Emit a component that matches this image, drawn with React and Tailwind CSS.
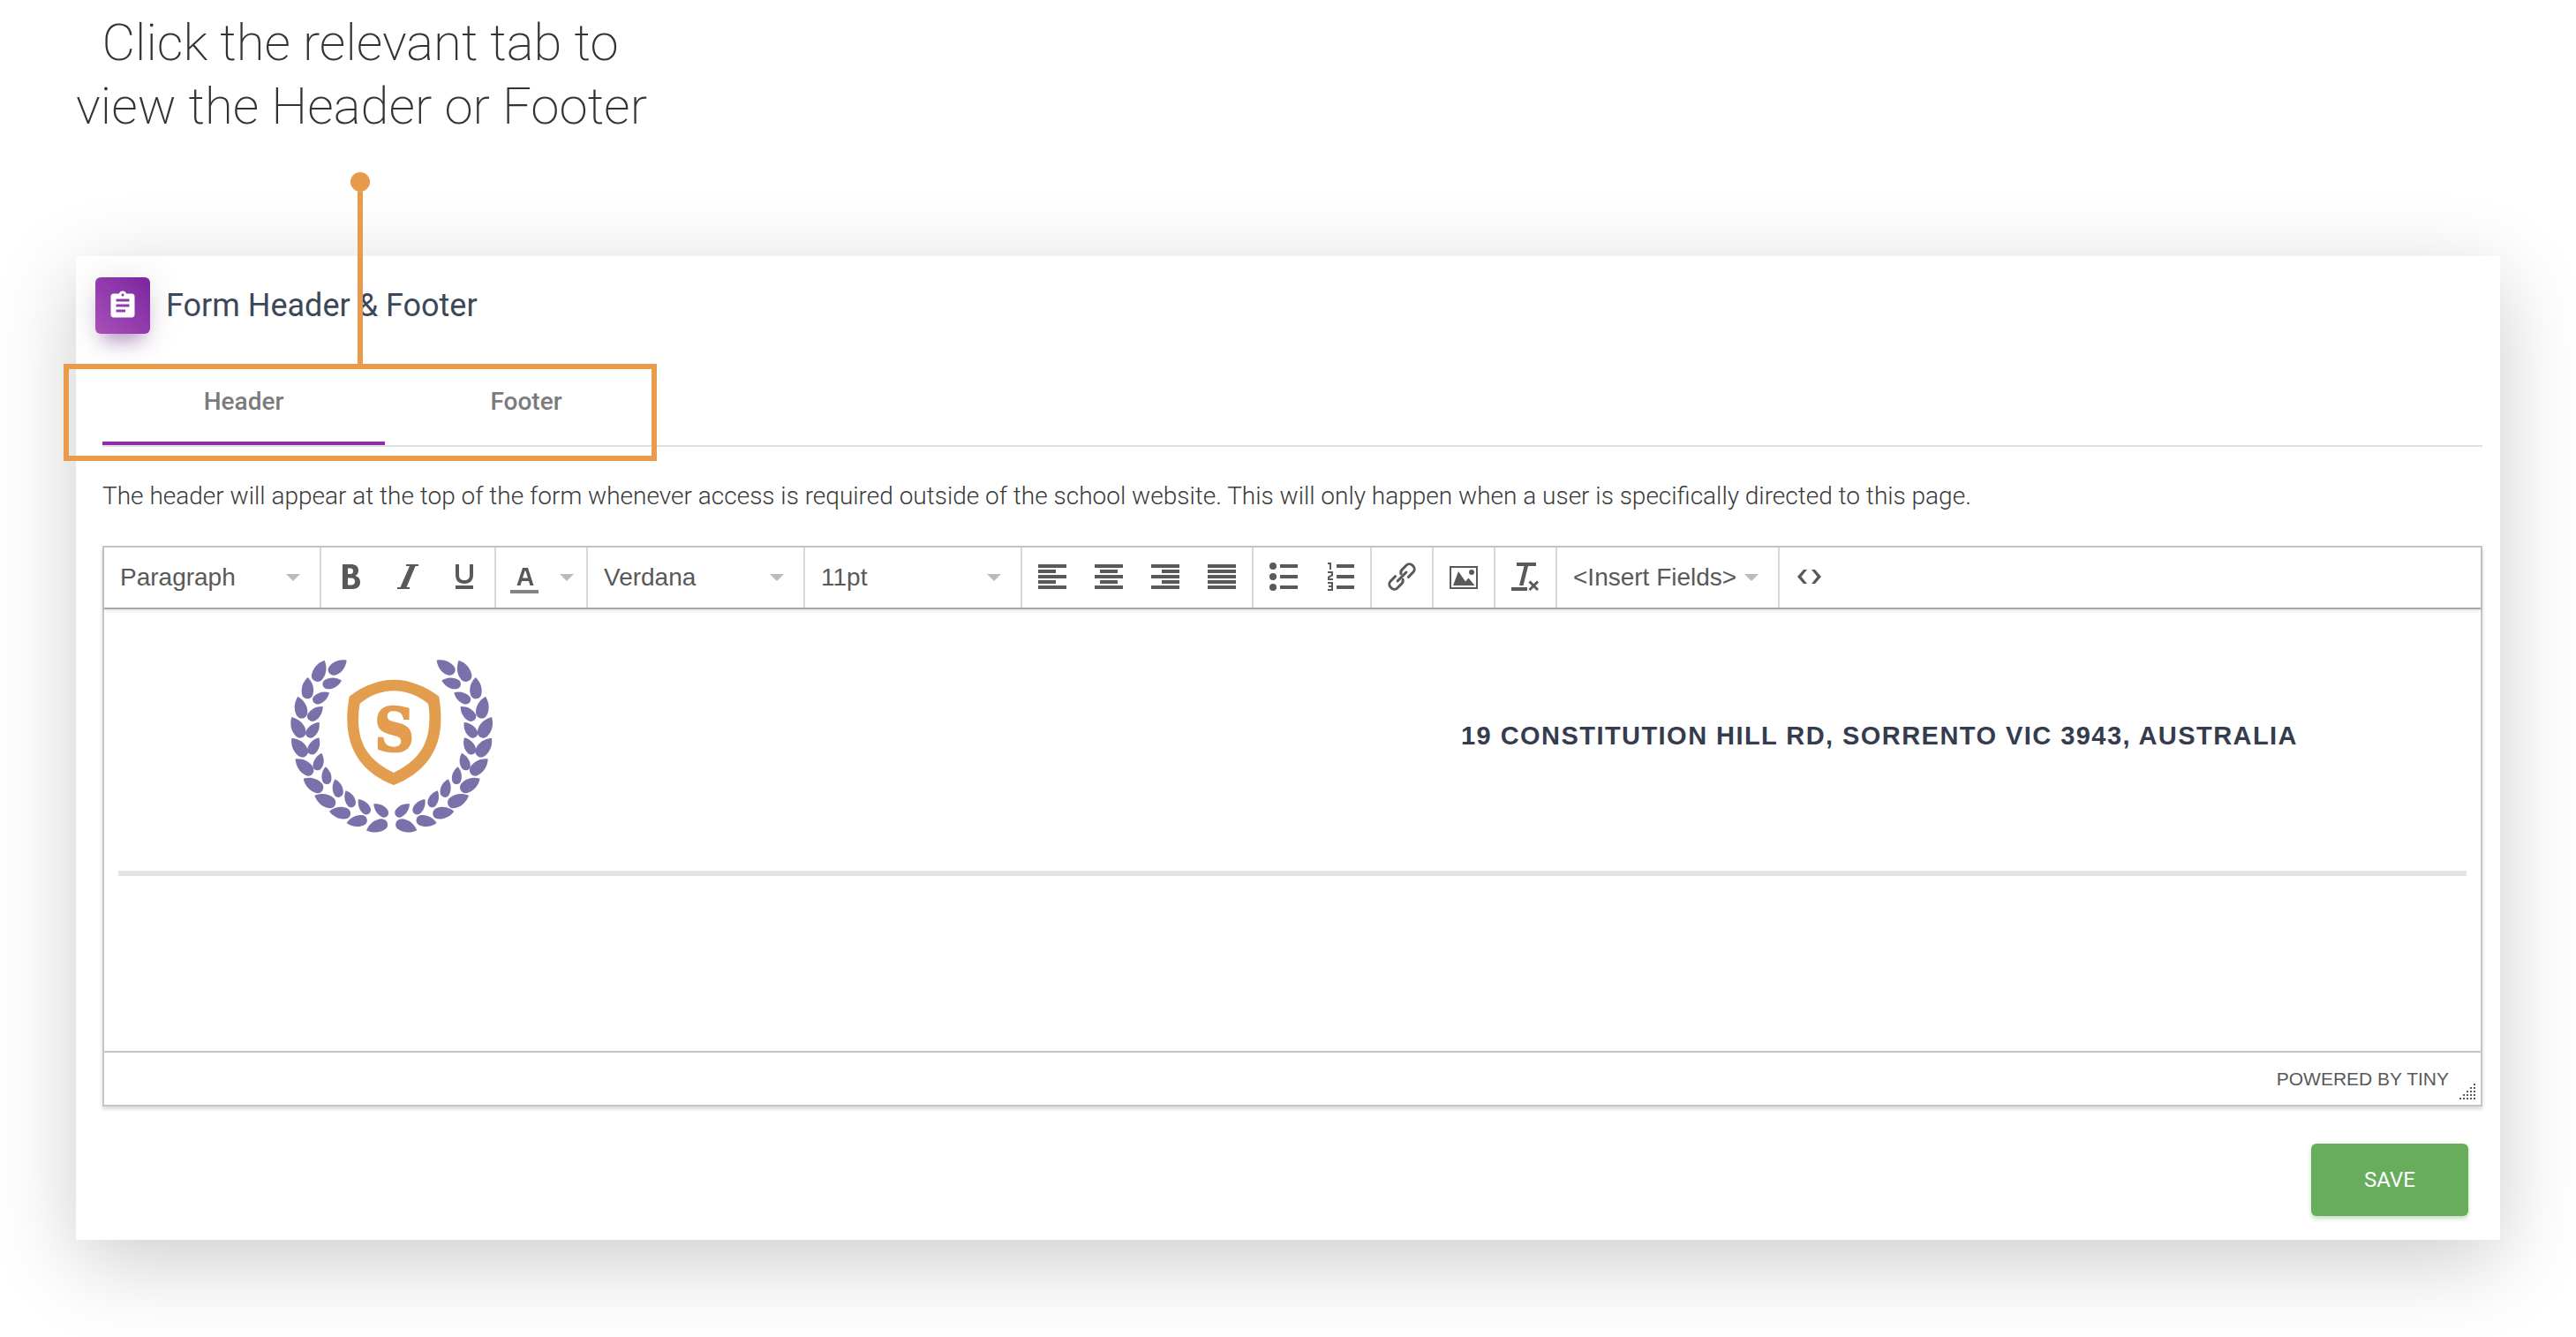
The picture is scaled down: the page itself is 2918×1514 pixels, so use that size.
import { useState } from 'react'
import { MdAssignment } from 'react-icons/md'

const TABS = ['Header', 'Footer']

// each leaf runs from its tip (x1, y1) to its base (x2, y2); the right half is mirrored
const LEAVES = [
  [203, 83, 170, 155], [146, 141, 144, 215], [112, 206, 130, 281], [91, 276, 130, 345],
  [91, 347, 140, 409], [104, 418, 162, 470], [131, 485, 197, 526], [169, 542, 240, 575],
  [219, 596, 292, 606], [278, 636, 348, 624], [345, 661, 417, 634],
  [278, 83, 218, 127], [261, 152, 196, 168], [219, 193, 164, 225], [197, 240, 148, 286],
  [185, 294, 144, 344], [184, 346, 152, 402], [193, 398, 174, 457], [206, 445, 212, 505],
  [239, 487, 254, 549], [275, 526, 300, 582], [318, 555, 354, 605], [370, 571, 417, 612],
]

function Leaf({ points }) {
  const [x1, y1, x2, y2] = points
  const length = Math.hypot(x2 - x1, y2 - y1)
  const angle = (Math.atan2(y2 - y1, x2 - x1) * 180) / Math.PI
  return (
    <path
      d="M0 0C22 -23 52 -34 82 -24C104 -15 104 15 84 23C54 33 22 23 0 0Z"
      transform={`translate(${x1} ${y1}) rotate(${angle}) scale(${length / 100})`}
    />
  )
}

function Crest() {
  return (
    <svg viewBox="0 0 900 720" className="h-[240px] w-[300px]" role="img" aria-label="School crest">
      <g fill="#7b70aa">
        {LEAVES.map((points, i) => <Leaf key={i} points={points} />)}
        <g transform="translate(862 0) scale(-1 1)">
          {LEAVES.map((points, i) => <Leaf key={i} points={points} />)}
        </g>
      </g>
      <path
        fill="#e29d4f"
        fillRule="evenodd"
        d="M438 149C492 149 546 171 592 206C597 240 599 262 598 290C596 395 538 468 438 507C338 468 282 395 280 290C279 262 282 240 287 206C332 171 384 149 438 149ZM438 187C395 187 357 203 323 230C319 250 318 268 318 290C320 376 360 426 438 465C516 426 556 376 559 290C560 268 559 250 555 230C520 203 481 187 438 187Z"
      />
      <text x="440" y="391" textAnchor="middle" fontSize="204" fill="#e29d4f" stroke="#e29d4f" strokeWidth="8" className="font-['DejaVu_Serif_Condensed','DejaVu_Serif',serif] font-bold">S</text>
    </svg>
  )
}

function Icon({ children }) {
  return (
    <svg viewBox="0 0 32 32" className="size-8 overflow-visible" fill="currentColor" aria-hidden="true">
      {children}
    </svg>
  )
}

const icons = {
  bold: <path fillRule="evenodd" d="M6 2H15C21 2 24 4.500 24 9C24 12 22.800 14 20.500 15C24 16 26 18.500 26 22C26 27.500 22.500 30 16.500 30H6ZM12 6.500V13H14.500C17 13 18 11.800 18 9.700C18 7.500 17 6.500 14.500 6.500ZM12 17.500V25.500H15.500C18.500 25.500 20 24 20 21.500C20 19 18.500 17.500 15.500 17.500Z" />,
  italic: <path d="M14 2H28V4H24.500L14.500 28H18V30H4V28H7.500L18 4H14Z" />,
  underline: <path d="M6 2H10V14C10 18 12 20 16 20C20 20 22 18 22 14V2H26V14C26 20.500 22.500 24 16 24C9.500 24 6 20.500 6 14ZM6 26H26V30H6Z" />,
  color: (
    <>
      <path fillRule="evenodd" d="M14 6H20L26.500 26H22.500L21 21H13L11.500 26H7.500ZM14 17.500H20L17.500 9.500H16.500Z" />
      <path fill="#848484" d="M0 31H32V35H0Z" />
    </>
  ),
  alignLeft: <path d="M0 2H32V6H0ZM0 8H20V12H0ZM0 14H32V18H0ZM0 20H20V24H0ZM0 26H32V30H0Z" />,
  alignCenter: <path d="M0 2H32V6H0ZM6 8H26V12H6ZM0 14H32V18H0ZM6 20H26V24H6ZM0 26H32V30H0Z" />,
  alignRight: <path d="M0 2H32V6H0ZM12 8H32V12H12ZM0 14H32V18H0ZM12 20H32V24H12ZM0 26H32V30H0Z" />,
  justify: <path d="M0 2H32V6H0ZM0 8H32V12H0ZM0 14H32V18H0ZM0 20H32V24H0ZM0 26H32V30H0Z" />,
  bullets: (
    <>
      <circle cx="4" cy="4" r="4" />
      <circle cx="4" cy="16" r="4" />
      <circle cx="4" cy="28" r="4" />
      <path d="M12 2H32V6H12ZM12 14H32V18H12ZM12 26H32V30H12Z" />
    </>
  ),
  numbers: (
    <>
      <path d="M12 2H32V6H12ZM12 14H32V18H12ZM12 26H32V30H12Z" />
      <path fill="none" stroke="currentColor" strokeWidth="2" d="M2 1H5V8M2 11H7V14.500L3 16.500V19H8M2 23H7V31H2M3 27H7" />
    </>
  ),
  link: (
    <g transform="translate(16 16) rotate(-45)" fill="none" stroke="currentColor" strokeWidth="3" strokeLinecap="round">
      <path d="M5 5.500H12.500A5 5 0 0 0 17.500 .500V-.500A5 5 0 0 0 12.500 -5.500H6A5 5 0 0 0 1.500 -3" />
      <path transform="rotate(180)" d="M5 5.500H12.500A5 5 0 0 0 17.500 .500V-.500A5 5 0 0 0 12.500 -5.500H6A5 5 0 0 0 1.500 -3" />
      <path d="M-7 0H7" />
    </g>
  ),
  image: (
    <>
      <path fill="none" stroke="currentColor" strokeWidth="2" d="M1 5H31V29H1Z" />
      <circle cx="25" cy="11" r="3" />
      <path d="M4 26L10 10L18 21.500L21.500 17.500L28.500 26Z" />
    </>
  ),
  clear: (
    <>
      <path d="M6 0H28V4H19L13.500 26H9L14.500 4H6ZM0 28H18V32H0Z" />
      <path fill="none" stroke="currentColor" strokeWidth="3" d="M20.500 21.500L30 31M30 21.500L20.500 31" />
    </>
  ),
  code: <path d="M9 8H13L6.500 16L13 24H9L2 16ZM18 8H22L29 16L22 24H18L24.500 16Z" />,
}

function Group({ className = '', children }) {
  return <div className={`flex border-r-2 border-[#d9d9d9] ${className}`}>{children}</div>
}

function ToolButton({ icon, label }) {
  return (
    <button type="button" aria-label={label} className="flex w-16 items-center justify-center pb-0.5">
      <Icon>{icons[icon]}</Icon>
    </button>
  )
}

function Caret() {
  return (
    <svg viewBox="0 0 16 8" className="h-2 w-4" fill="#b5bcc2" aria-hidden="true">
      <path d="M0 0H16L8 8Z" />
    </svg>
  )
}

function ToolSelect({ label, value, className }) {
  return (
    <div className={`relative border-r-2 border-[#d9d9d9] ${className}`}>
      <select aria-label={label} defaultValue={value} className="h-full w-full appearance-none bg-transparent pl-[18px] outline-none">
        <option>{value}</option>
      </select>
      <span className="pointer-events-none absolute inset-y-0 right-[22px] flex items-center">
        <Caret />
      </span>
    </div>
  )
}

function Editor() {
  return (
    <section className="border-2 border-[#c5c5c5] font-['Liberation_Sans',Arial,sans-serif] text-[#595959] shadow-[0_3px_4px_rgba(0,0,0,0.15)]">
      <div role="toolbar" aria-label="Formatting" className="flex h-[70px] border-b-2 border-[#a8a8a8] text-[28px] shadow-[0_2px_4px_rgba(0,0,0,0.1)]">
        <ToolSelect label="Block format" value="Paragraph" className="w-[246px]" />
        <Group className="px-0.5">
          <ToolButton icon="bold" label="Bold" />
          <ToolButton icon="italic" label="Italic" />
          <ToolButton icon="underline" label="Underline" />
        </Group>
        <Group className="w-[104px]">
          <ToolButton icon="color" label="Text color" />
          <button type="button" aria-label="Choose text color" className="flex flex-1 items-center pl-2">
            <Caret />
          </button>
        </Group>
        <ToolSelect label="Font family" value="Verdana" className="w-[246px]" />
        <ToolSelect label="Font size" value="11pt" className="w-[246px]" />
        <Group className="px-0.5">
          <ToolButton icon="alignLeft" label="Align left" />
          <ToolButton icon="alignCenter" label="Align center" />
          <ToolButton icon="alignRight" label="Align right" />
          <ToolButton icon="justify" label="Justify" />
        </Group>
        <Group className="px-0.5">
          <ToolButton icon="bullets" label="Bullet list" />
          <ToolButton icon="numbers" label="Numbered list" />
        </Group>
        <Group className="px-0.5">
          <ToolButton icon="link" label="Insert link" />
        </Group>
        <Group className="px-0.5">
          <ToolButton icon="image" label="Insert image" />
        </Group>
        <Group className="px-0.5">
          <ToolButton icon="clear" label="Clear formatting" />
        </Group>
        <ToolSelect label="Insert fields" value="<Insert Fields>" className="w-[252px]" />
        <div className="flex px-0.5">
          <ToolButton icon="code" label="Source code" />
        </div>
      </div>

      <div className="min-h-[500px] px-4 pt-[30px]">
        <div className="grid grid-cols-2 items-center">
          <div className="pl-[166px]">
            <Crest />
          </div>
          <p className="pb-3 text-center text-[29px] font-bold tracking-wider whitespace-nowrap text-[#343c4e]">
            19 CONSTITUTION HILL RD, SORRENTO VIC 3943, AUSTRALIA
          </p>
        </div>
        <hr className="mt-[26px] border-t-6 border-[#e3e3e3]" />
      </div>

      <div className="relative flex h-[61px] items-center justify-end border-t-2 border-[#c5c5c5] pr-9 text-[21px]">
        <span>POWERED BY TINY</span>
        <svg viewBox="0 0 18 18" className="absolute right-1.5 bottom-1.5 size-[18px]" fill="#595959" aria-hidden="true">
          {[0, 1, 2, 3, 4].map((row) =>
            [0, 1, 2, 3, 4].filter((col) => row + col >= 4).map((col) => (
              <rect key={`${row}-${col}`} x={col * 4} y={row * 4} width="2" height="2" />
            ))
          )}
        </svg>
      </div>
    </section>
  )
}

export default function App() {
  const [active, setActive] = useState('Header')

  return (
    <div className="min-h-screen overflow-hidden bg-white px-[86px] pb-[110px] font-[Roboto,sans-serif]">
      <div className="flex h-[290px] pt-3">
        <p className="w-[644px] text-center text-[58px] leading-[72px] font-extralight whitespace-nowrap text-[#333333]">
          Click the relevant tab to
          <br />
          view the Header or Footer
        </p>
      </div>

      <main className="bg-white pt-6 pr-5 pb-[27px] pl-[30px] shadow-[0_24px_90px_rgba(0,0,0,0.2)]">
        <header className="-ml-2 flex items-center gap-[18px]">
          <span className="flex h-16 w-[62px] items-center justify-center rounded-md bg-linear-to-tr from-[#a850b8] to-[#7b249f] text-white shadow-[0_4px_40px_rgba(0,0,0,0.12),0_16px_20px_-8px_rgba(125,40,160,0.4)]">
            <MdAssignment size={36} />
          </span>
          <h1 className="text-[36px] leading-[44px] text-[#3c4858]">Form Header &amp; Footer</h1>
        </header>

        <div className="relative mt-8 border-b-2 border-[#e0e0e0]">
          <div role="tablist" className="flex">
            {TABS.map((tab) => (
              <button
                key={tab}
                type="button"
                role="tab"
                aria-selected={active === tab}
                onClick={() => setActive(tab)}
                className={`h-[94px] w-80 border-b-4 text-[28px] font-medium text-[#7b7b7b] ${active === tab ? 'border-[#8e2dab]' : 'border-transparent'}`}
              >
                {tab}
              </button>
            ))}
          </div>
          {/* callout frame with its connector */}
          <div className="pointer-events-none absolute top-0.5 -left-11 h-[110px] w-[672px] border-6 border-[#e79b4b]">
            <div className="absolute bottom-full left-1/2 flex -translate-x-1/2 flex-col items-center">
              <span className="size-[22px] rounded-full bg-[#e79b4b]" />
              <span className="h-[201px] w-1.5 bg-[#e79b4b]" />
            </div>
          </div>
        </div>

        <p className="my-9 text-[28px] leading-10 font-light text-[#3a3a3a]">
          The header will appear at the top of the form whenever access is required outside of the school website. This
          will only happen when a user is specifically directed to this page.
        </p>

        <Editor />

        <div className="mt-[42px] flex justify-end pr-4">
          <button type="button" className="h-[82px] w-[178px] rounded-md bg-[#68ad5c] text-[24px] text-white shadow-[0_3px_5px_rgba(104,173,92,0.4)]">
            SAVE
          </button>
        </div>
      </main>
    </div>
  )
}
